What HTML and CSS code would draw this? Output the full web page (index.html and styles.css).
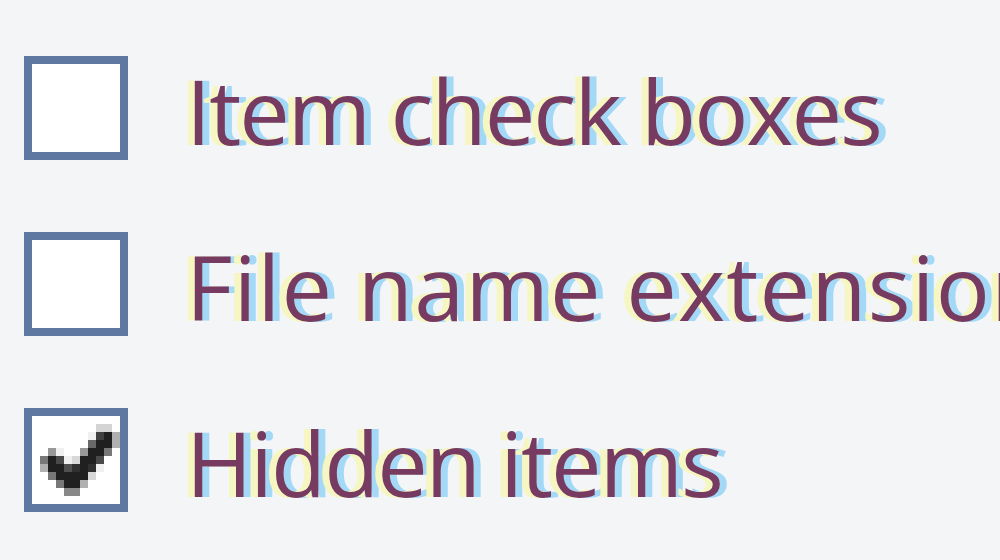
FILE: index.html
```html
<!DOCTYPE html>
<html lang="en">
<head>
<meta charset="utf-8">
<title>View options</title>
<link rel="stylesheet" href="styles.css">
</head>
<body>
<div class="options">
  <div class="option">
    <div class="box"></div>
    <span class="label">Item check boxes</span>
  </div>
  <div class="option">
    <div class="box"></div>
    <span class="label label-wide">File name extensions</span>
  </div>
  <div class="option">
    <div class="box">
      <svg class="check" viewBox="0 0 11 11" shape-rendering="crispEdges" aria-hidden="true">
        <rect x="8" y="1" width="2" height="1" fill="#d4d4d4"/>
        <rect x="7" y="2" width="1" height="1" fill="#f0f0f0"/>
        <rect x="8" y="2" width="1" height="1" fill="#404040"/>
        <rect x="9" y="2" width="1" height="1" fill="#202020"/>
        <rect x="10" y="2" width="1" height="2" fill="#b0b0b0"/>
        <rect x="7" y="3" width="1" height="1" fill="#686868"/>
        <rect x="8" y="3" width="2" height="1" fill="#202020"/>
        <rect x="2" y="4" width="1" height="1" fill="#989898"/>
        <rect x="3" y="4" width="1" height="1" fill="#f0f0f0"/>
        <rect x="6" y="4" width="1" height="1" fill="#989898"/>
        <rect x="7" y="4" width="2" height="1" fill="#202020"/>
        <rect x="9" y="4" width="1" height="1" fill="#787878"/>
        <rect x="1" y="5" width="1" height="1" fill="#787878"/>
        <rect x="2" y="5" width="1" height="1" fill="#202020"/>
        <rect x="3" y="5" width="1" height="1" fill="#4a4a4a"/>
        <rect x="4" y="5" width="1" height="1" fill="#f0f0f0"/>
        <rect x="5" y="5" width="1" height="1" fill="#d8d8d8"/>
        <rect x="6" y="5" width="2" height="1" fill="#202020"/>
        <rect x="8" y="5" width="1" height="1" fill="#4a4a4a"/>
        <rect x="1" y="6" width="1" height="1" fill="#b0b0b0"/>
        <rect x="2" y="6" width="2" height="1" fill="#202020"/>
        <rect x="4" y="6" width="1" height="1" fill="#505050"/>
        <rect x="5" y="6" width="1" height="1" fill="#303030"/>
        <rect x="6" y="6" width="1" height="1" fill="#202020"/>
        <rect x="7" y="6" width="1" height="1" fill="#303030"/>
        <rect x="8" y="6" width="1" height="1" fill="#f0f0f0"/>
        <rect x="2" y="7" width="1" height="1" fill="#787878"/>
        <rect x="3" y="7" width="4" height="1" fill="#202020"/>
        <rect x="7" y="7" width="1" height="1" fill="#d8d8d8"/>
        <rect x="3" y="8" width="1" height="1" fill="#787878"/>
        <rect x="4" y="8" width="2" height="1" fill="#202020"/>
        <rect x="6" y="8" width="1" height="1" fill="#b0b0b0"/>
        <rect x="4" y="9" width="2" height="1" fill="#888888"/>
      </svg>
    </div>
    <span class="label">Hidden items</span>
  </div>
</div>
</body>
</html>
```

FILE: styles.css
```css
html, body {
  margin: 0;
  padding: 0;
  background: #f4f5f7;
  overflow: hidden;
}

body {
  width: 1000px;
  height: 560px;
}

.options {
  display: flex;
  flex-direction: column;
  padding: 20px 0 0 24px;
}

.option {
  display: flex;
  align-items: center;
  height: 176px;
  gap: 58px;
  white-space: nowrap;
}

.box {
  flex: none;
  box-sizing: border-box;
  width: 104px;
  height: 104px;
  border: 8px solid #5e78a1;
  background: #ffffff;
}

.check {
  display: block;
  width: 88px;
  height: 88px;
}

.label {
  font-family: "Open Sans", "Noto Sans", sans-serif;
  font-size: 90px;
  line-height: 90px;
  letter-spacing: -2px;
  color: #773a60;
  position: relative;
  top: 2px;
  text-shadow: -7px 0 0 #f6f6c2, 7px 0 0 #a3d9f7;
}

.label-wide {
  letter-spacing: 1.2px;
}
```
